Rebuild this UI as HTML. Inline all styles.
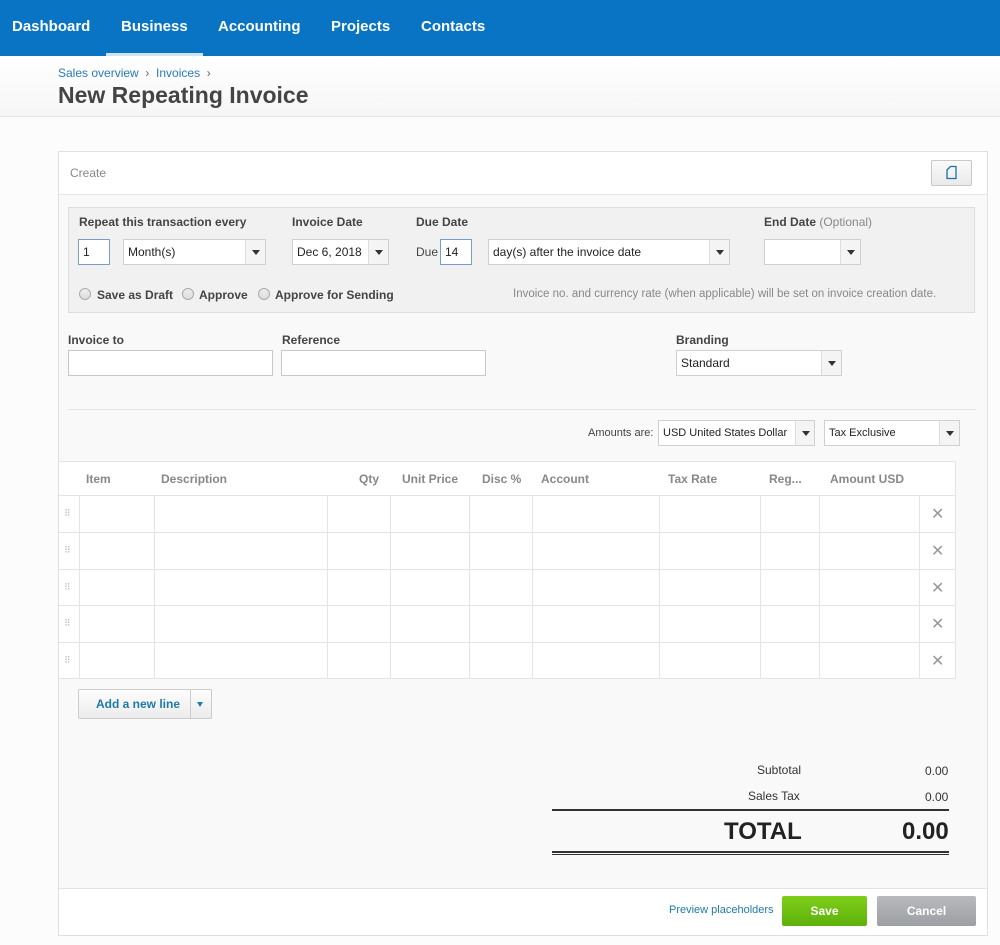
<!DOCTYPE html>
<html><head><meta charset="utf-8">
<style>
*{box-sizing:border-box;margin:0;padding:0}
body{width:1000px;height:945px;background:#fcfcfc;font-family:"Liberation Sans",Arial,sans-serif;position:relative;overflow:hidden;color:#333}
.a{position:absolute}
.nav{left:0;top:0;width:1000px;height:56px;background:#0a74c4}
.nav span{position:absolute;top:18px;color:#fff;font-weight:bold;font-size:15px}
.hd{left:0;top:56px;width:1000px;height:61px;background:linear-gradient(#fff,#f6f6f6);border-bottom:1px solid #e2e2e2}
.panel{left:58px;top:151px;width:930px;height:785px;background:#f9f9f9;border:1px solid #e0e0e0}
.lbl{font-size:12px;font-weight:bold;color:#444}
.inp{background:#fff;border:1px solid #c8c8c8;font-size:12px;color:#222;padding:0 4px;line-height:24px;height:26px}
.inp.b{border-color:#7a9fc4}
.sel{background:#fff;border:1px solid #d0d0d0;font-size:12px;color:#222;padding:0 4px;line-height:24px;height:26px;white-space:nowrap;overflow:hidden}
.sel.s{font-size:11px}
.sel i{position:absolute;right:0;top:0;width:20px;height:24px;border-left:1px solid #ddd;background:#f4f4f4}
.sel i:after{content:"";position:absolute;left:6px;top:10px;border:4px solid transparent;border-top:5px solid #333}
.rad{width:12px;height:12px;border-radius:50%;border:1px solid #aaa;background:linear-gradient(#eee,#ddd)}
.th{font-size:12px;font-weight:bold;color:#888;top:472px}
.vl{width:1px;background:#e4e4e4;top:495px;height:184px}
.hl{height:1px;background:#e4e4e4}
.x{color:#999;font-size:16px;left:931px}
.dr{color:#bbb;font-size:9px;left:64px;letter-spacing:-1px}
</style></head><body>
<div class="a nav">
<span style="left:12px">Dashboard</span><span style="left:121px">Business</span><span style="left:218px">Accounting</span><span style="left:331px">Projects</span><span style="left:421px">Contacts</span>
<div class="a" style="left:106px;top:53px;width:97px;height:3px;background:#cfe3f4"></div>
</div>
<div class="a hd">
<div class="a" style="left:58px;top:10px;font-size:12px;color:#2a7ab8">Sales overview &nbsp;<span style="color:#666">›</span>&nbsp; Invoices &nbsp;<span style="color:#666">›</span></div>
<div class="a" style="left:58px;top:26px;font-size:23px;font-weight:bold;color:#444">New Repeating Invoice</div>
</div>
<div class="a panel"></div>
<div class="a" style="left:59px;top:152px;width:928px;height:43px;background:#fff;border-bottom:1px solid #e6e6e6"></div>
<div class="a" style="left:70px;top:166px;font-size:12px;color:#888">Create</div>
<div class="a" style="left:931px;top:160px;width:41px;height:26px;border:1px solid #c8c8c8;border-radius:2px;background:linear-gradient(#fafafa,#eaeaea)">
<svg width="41" height="26" style="position:absolute;left:-1px;top:-1px"><path d="M16 10 L19.5 6.5 L25 6.5 L25 18.5 L16 18.5 Z" fill="none" stroke="#1a6fa8" stroke-width="1.3"/></svg></div>
<div class="a" style="left:68px;top:207px;width:907px;height:106px;background:#f1f1f1;border:1px solid #ddd"></div>
<div class="a lbl" style="left:79px;top:215px">Repeat this transaction every</div>
<div class="a lbl" style="left:292px;top:215px">Invoice Date</div>
<div class="a lbl" style="left:416px;top:215px">Due Date</div>
<div class="a lbl" style="left:764px;top:215px">End Date <span style="font-weight:normal;color:#888">(Optional)</span></div>
<div class="a inp b" style="left:78px;top:239px;width:32px">1</div>
<div class="a sel" style="left:123px;top:239px;width:143px">Month(s)<i></i></div>
<div class="a sel" style="left:292px;top:239px;width:97px">Dec 6, 2018<i></i></div>
<div class="a" style="left:416px;top:245px;font-size:12px;color:#444">Due</div>
<div class="a inp b" style="left:440px;top:239px;width:32px">14</div>
<div class="a sel" style="left:488px;top:239px;width:242px">day(s) after the invoice date<i></i></div>
<div class="a sel" style="left:764px;top:239px;width:97px"><i></i></div>
<div class="a rad" style="left:79px;top:288px"></div><div class="a lbl" style="left:97px;top:288px">Save as Draft</div>
<div class="a rad" style="left:182px;top:288px"></div><div class="a lbl" style="left:199px;top:288px">Approve</div>
<div class="a rad" style="left:258px;top:288px"></div><div class="a lbl" style="left:275px;top:288px">Approve for Sending</div>
<div class="a" style="left:513px;top:288px;font-size:11.5px;color:#888">Invoice no. and currency rate (when applicable) will be set on invoice creation date.</div>
<div class="a lbl" style="left:68px;top:333px">Invoice to</div>
<div class="a lbl" style="left:282px;top:333px">Reference</div>
<div class="a lbl" style="left:676px;top:333px">Branding</div>
<div class="a inp" style="left:68px;top:350px;width:205px"></div>
<div class="a inp" style="left:281px;top:350px;width:205px"></div>
<div class="a sel" style="left:676px;top:350px;width:166px">Standard<i></i></div>
<div class="a" style="left:68px;top:409px;width:908px;height:1px;background:#e2e2e2"></div>
<div class="a" style="left:588px;top:427px;font-size:11px;color:#444">Amounts are:</div>
<div class="a sel s" style="left:658px;top:420px;width:157px">USD United States Dollar<i style="width:19px"></i></div>
<div class="a sel s" style="left:824px;top:420px;width:136px">Tax Exclusive<i></i></div>
<div class="a" style="left:59px;top:461px;width:897px;height:218px;background:#fff;border:1px solid #e4e4e4;border-left:none"></div>
<div class="a th" style="left:86px">Item</div><div class="a th" style="left:161px">Description</div><div class="a th" style="left:359px">Qty</div><div class="a th" style="left:402px">Unit Price</div><div class="a th" style="left:482px">Disc %</div><div class="a th" style="left:541px">Account</div><div class="a th" style="left:668px">Tax Rate</div><div class="a th" style="left:769px">Reg...</div><div class="a th" style="left:830px">Amount USD</div>
<div class="a" style="left:59px;top:495px;width:897px;height:1px;background:#e4e4e4"></div>
<div class="a vl" style="left:79px"></div><div class="a vl" style="left:154px"></div><div class="a vl" style="left:327px"></div><div class="a vl" style="left:390px"></div><div class="a vl" style="left:469px"></div><div class="a vl" style="left:532px"></div><div class="a vl" style="left:659px"></div><div class="a vl" style="left:760px"></div><div class="a vl" style="left:819px"></div><div class="a vl" style="left:919px"></div>
<div class="a hl" style="top:532px;left:59px;width:897px"></div><div class="a hl" style="top:569px;left:59px;width:897px"></div><div class="a hl" style="top:605px;left:59px;width:897px"></div><div class="a hl" style="top:642px;left:59px;width:897px"></div>
<div class="a dr" style="top:508px">⠿</div><div class="a dr" style="top:545px">⠿</div><div class="a dr" style="top:582px">⠿</div><div class="a dr" style="top:618px">⠿</div><div class="a dr" style="top:655px">⠿</div>
<div class="a x" style="top:504px">✕</div><div class="a x" style="top:541px">✕</div><div class="a x" style="top:578px">✕</div><div class="a x" style="top:614px">✕</div><div class="a x" style="top:651px">✕</div>
<div class="a" style="left:78px;top:689px;width:134px;height:30px;border:1px solid #ccc;border-radius:2px;background:linear-gradient(#fdfdfd,#ececec)"></div>
<div class="a" style="left:190px;top:690px;width:1px;height:28px;background:#ccc"></div>
<div class="a" style="left:96px;top:697px;font-size:12px;font-weight:bold;color:#1f7aa8">Add a new line</div>
<div class="a" style="left:197px;top:702px;border:3.5px solid transparent;border-top:5px solid #1f7aa8"></div>
<div class="a" style="left:757px;top:763px;font-size:12px;color:#333">Subtotal</div>
<div class="a" style="left:925px;top:764px;font-size:12px;color:#333">0.00</div>
<div class="a" style="left:748px;top:789px;font-size:12px;color:#333">Sales Tax</div>
<div class="a" style="left:925px;top:790px;font-size:12px;color:#333">0.00</div>
<div class="a" style="left:552px;top:809px;width:397px;height:2px;background:#333"></div>
<div class="a" style="left:724px;top:818px;font-size:24px;font-weight:bold;color:#222">TOTAL</div>
<div class="a" style="left:902px;top:818px;font-size:24px;font-weight:bold;color:#222">0.00</div>
<div class="a" style="left:552px;top:851px;width:397px;height:4px;border-top:2px solid #333;border-bottom:1px solid #333"></div>
<div class="a" style="left:59px;top:888px;width:928px;height:47px;background:#fff;border-top:1px solid #e4e4e4"></div>
<div class="a" style="left:669px;top:904px;font-size:11px;color:#1f7aa8">Preview placeholders</div>
<div class="a" style="left:782px;top:896px;width:85px;height:30px;background:linear-gradient(#7fce1a,#5eb10c);border-radius:2px;color:#fff;font-weight:bold;font-size:12px;text-align:center;line-height:30px">Save</div>
<div class="a" style="left:877px;top:896px;width:99px;height:30px;background:linear-gradient(#b8babd,#9c9fa3);border-radius:2px;color:#fff;font-weight:bold;font-size:12px;text-align:center;line-height:30px">Cancel</div>
</body></html>
